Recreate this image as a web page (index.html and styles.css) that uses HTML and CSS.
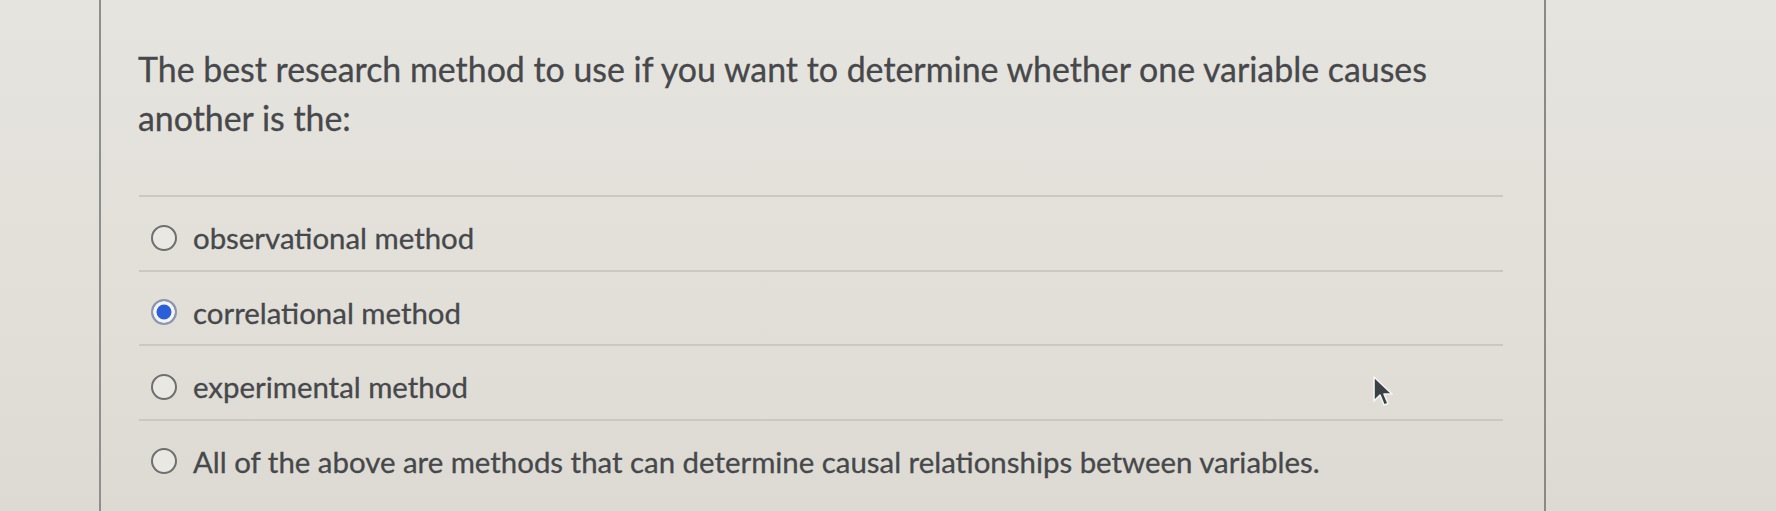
FILE: index.html
```html
<!DOCTYPE html>
<html lang="en">
<head>
    <meta charset="UTF-8">
    <meta name="viewport" content="width=device-width, initial-scale=1.0">
    <title>Quiz Question</title>
    <link rel="stylesheet" href="styles.css">
</head>
<body>
    <div class="page">
        <div class="gutter"></div>

        <div class="question">
            <div class="question-text">
                The best research method to use if you want to determine whether one variable causes another is the:
            </div>

            <div class="answers">
                <label class="answer">
                    <span class="radio"></span>
                    <span class="answer-text">observational method</span>
                </label>
                <label class="answer">
                    <span class="radio checked"></span>
                    <span class="answer-text">correlational method</span>
                </label>
                <label class="answer">
                    <span class="radio"></span>
                    <span class="answer-text">experimental method</span>
                </label>
                <label class="answer">
                    <span class="radio"></span>
                    <span class="answer-text">All of the above are methods that can determine causal relationships between variables.</span>
                </label>
            </div>

            <svg class="cursor" width="22" height="32" viewBox="0 0 22 32">
                <path d="M2 1 L2 25 L8 19 L12 29 L16 27.5 L12 18 L20 18 Z" fill="#3b4046" stroke="#f4f4f2" stroke-width="1.6" stroke-linejoin="round"/>
            </svg>
        </div>

        <div class="side"></div>
    </div>
</body>
</html>
```

FILE: styles.css
```css
body {
    margin: 0;
    background: #e2e0d9;
    font-family: Lato, "Open Sans", sans-serif;
    color: #46484b;
}

.page {
    display: flex;
    height: 511px;
    background: linear-gradient(180deg, #e6e4de 0%, #e1dfd8 60%, #dcdad2 100%);
}

.gutter {
    width: 99px;
    border-right: 2px solid #8f8e8a;
}

.question {
    position: relative;
    width: 1443px;
    border-right: 2px solid #8a8985;
}

.question-text {
    padding: 45px 0 0 37px;
    width: 1340px;
    font-size: 33.9px;
    line-height: 49px;
    -webkit-text-stroke: 0.3px #46484b;
}

.answers {
    margin: 52px 0 0 38px;
    width: 1364px;
}

.answer {
    display: flex;
    align-items: center;
    gap: 16px;
    height: 74.5px;
    padding: 9px 0 0 12px;
    border-top: 2px solid #cac8c1;
    box-sizing: border-box;
    font-size: 29.4px;
    -webkit-text-stroke: 0.3px #46484b;
}

.radio {
    width: 22px;
    height: 22px;
    border: 2.5px solid #6f6f6e;
    border-radius: 50%;
    background: #eae8e2;
    flex-shrink: 0;
}

.radio.checked {
    border-color: #8e96a8;
    background: #2b5fd9;
    box-shadow: inset 0 0 0 3.5px #f3f3f1;
}

.cursor {
    position: absolute;
    left: 1271px;
    top: 376px;
}

.side {
    flex: 1;
}
```
